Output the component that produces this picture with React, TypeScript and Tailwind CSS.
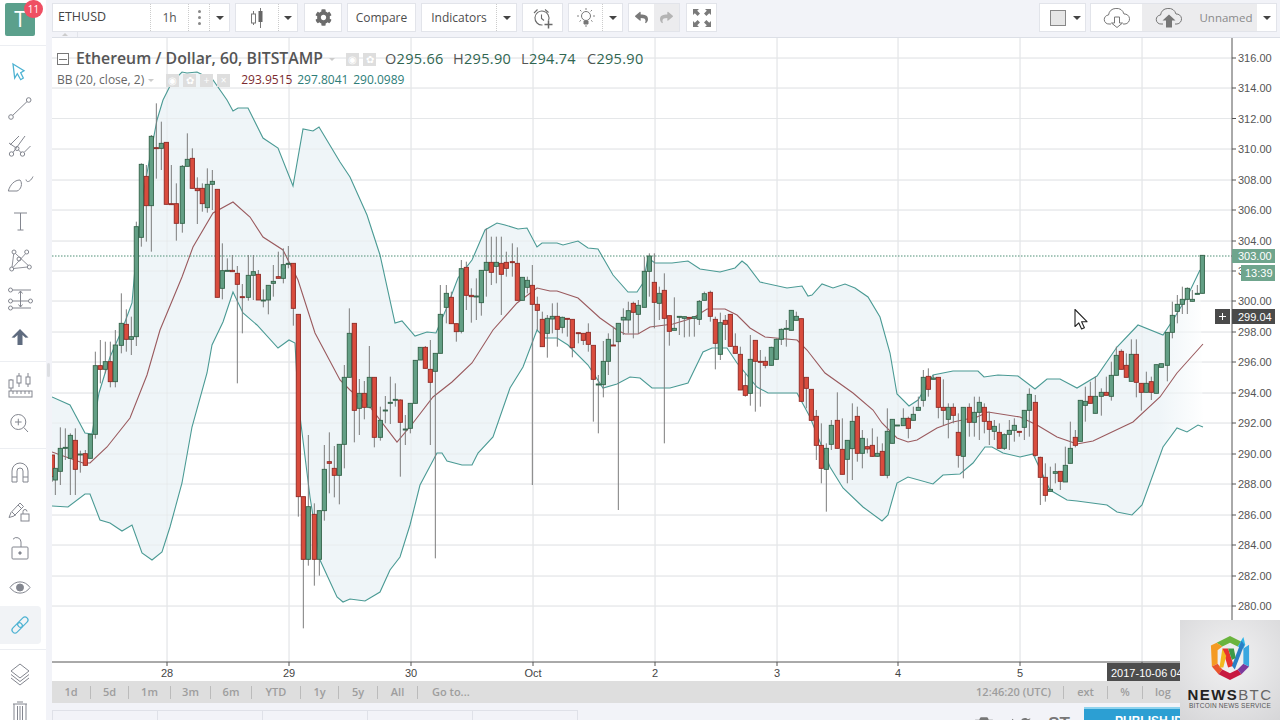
import type { ReactNode } from "react";
import { FaCog, FaReply, FaShare, FaTwitter, FaCamera } from "react-icons/fa";

type C = [number, number, number, number, number, number];
type Group = { ox: number; oy: number; items: C[] };

// candles read off the picture: x, high, body top, body bottom, low, 1 = red
const groups: Group[] = [
  { ox: 50, oy: 340, items: [
    [7,345,345,410,425,1],[16,385,385,420,465,0],[31,262,325,394,435,0],[46,265,322,325,360,0],[61,280,286,355,465,0],[76,265,301,388,465,1],
    [91,332,342,345,398,0],[106,330,341,376,378,1],[121,283,283,355,355,0],[136,35,77,283,296,0],[151,0,77,88,130,1],[166,5,65,88,100,0],[181,5,65,125,142,1],[196,-30,15,125,142,0],
  ] },
  { ox: 50, oy: 100, items: [
    [214,580,670,736,760,0],[229,628,673,718,755,1],[244,650,710,718,765,0],[259,365,380,710,738,0],[274,190,193,412,440,0],[289,195,229,317,425,1],
    [304,105,109,317,455,0],[319,10,143,145,236,1],[334,65,130,145,210,0],[349,127,127,313,313,1],[364,195,311,313,313,1],[379,250,311,370,422,1],
    [397,195,199,370,398,0],[412,100,178,199,199,0],[427,145,175,265,265,1],[442,232,265,272,372,1],[457,250,265,311,335,1],[472,205,253,323,338,0],
    [487,210,244,253,330,0],[502,268,268,592,592,1],[517,430,512,565,598,0],[532,475,511,512,512,0],[547,465,511,515,515,1],[562,498,520,553,850,1],
    [577,552,590,592,700,1],[595,465,526,592,602,0],[610,465,515,526,600,0],[625,510,523,600,600,1],[640,568,600,601,622,0],[655,556,556,600,643,0],
    [670,495,544,550,590,0],[685,455,530,535,535,1],[700,445,494,535,550,0],[715,438,490,493,505,0],[730,490,490,625,677,1],[745,643,643,1190,1250,1],
  ] },
  { ox: 50, oy: 340, items: [
    [760,470,470,658,865,1],[775,285,500,658,677,0],[793,490,523,658,737,1],[808,512,512,658,707,0],[823,315,388,512,542,0],[838,277,365,370,460,1],
    [853,318,385,406,472,1],[868,313,313,406,493,0],[883,75,112,313,385,0],[898,-95,-20,112,112,0],[913,-50,-50,211,307,1],[928,117,160,205,285,0],
    [943,123,160,202,238,1],[958,18,112,202,205,0],[973,112,112,292,322,1],[991,200,241,292,302,0],[1006,168,210,212,250,0],[1021,110,187,190,252,0],
    [1036,130,178,181,200,0],[1051,178,180,247,410,1],[1066,225,267,268,315,0],[1081,190,190,265,280,0],[1096,60,61,190,190,0],[1111,22,22,60,60,0],
    [1126,18,22,85,85,1],[1141,0,88,127,315,1],[1156,40,40,94,655,0],[1171,-165,-77,40,40,0],
  ] },
  { ox: 440, oy: 220, items: [
    [19,195,220,262,310,0],[34,215,232,311,311,1],[49,311,311,335,365,1],[64,120,146,334,340,0],[79,125,142,226,270,1],[94,205,226,230,308,1],
    [109,175,228,230,300,0],[124,150,151,248,287,0],[139,25,127,151,230,0],[154,50,127,157,195,1],[169,50,127,139,190,0],[184,50,130,163,285,1],
    [199,95,127,145,170,1],[217,70,125,128,170,1],[232,82,130,241,241,1],[247,172,172,241,241,0],[262,170,181,202,220,0],[277,135,196,253,795,1],
    [292,230,253,271,330,1],[307,275,298,380,380,1],[322,285,295,340,413,0],[337,250,289,297,340,0],[352,248,289,328,380,1],[367,290,292,322,340,0],
    [382,295,295,298,350,1],[397,298,298,383,412,1],[415,338,338,340,370,1],[430,340,340,361,375,1],[445,310,337,373,395,1],[460,376,376,478,605,1],
    [475,465,492,494,640,0],[490,363,424,494,532,0],[505,340,358,424,465,0],[520,320,375,376,376,1],[535,310,310,365,870,0],[550,265,292,300,345,0],
    [565,245,272,300,340,0],[580,245,250,277,355,1],[595,240,256,283,340,0],[613,110,154,262,262,0],[628,100,108,154,230,0],[643,100,187,247,325,1],
    [658,200,220,250,300,0],[673,160,211,295,670,1],[688,287,287,334,377,1],[703,232,325,331,331,0],[718,289,289,290,345,0],[733,290,290,295,352,0],
    [748,292,292,294,350,1],[763,290,290,295,350,0],[778,240,244,298,315,0],[793,215,221,241,241,0],[811,212,217,289,305,1],[826,290,298,370,448,1],
    [841,278,308,403,420,0],[856,285,301,313,360,1],[871,283,283,379,379,1],[886,340,379,400,400,1],[901,380,403,510,510,1],[916,460,497,526,530,1],
    [931,345,418,520,557,0],[946,361,361,424,575,1],[961,390,424,425,560,1],[976,410,424,436,445,1],[994,380,382,436,436,0],[1009,355,358,418,420,0],
    [1024,325,328,358,375,0],[1039,300,325,328,380,0],[1054,270,271,331,331,0],[1069,275,289,301,301,0],[1084,296,296,544,544,1],[1099,472,472,505,565,1],
    [1114,508,508,601,601,1],[1129,570,589,676,720,1],[1144,610,676,745,790,1],[1159,670,685,748,875,0],[1174,600,616,673,690,0],[1192,517,601,685,685,1],
  ] },
  { ox: 810, oy: 240, items: [
    [97,535,628,703,703,1],[112,601,601,658,730,0],[127,490,544,626,720,0],[142,500,529,640,665,1],[157,570,595,640,685,0],[172,595,620,627,640,1],
    [187,565,616,649,650,1],[202,590,640,649,650,0],[217,610,634,706,706,1],[232,505,574,706,715,0],[247,538,538,610,610,0],[262,555,555,556,556,0],
    [280,505,535,557,557,0],[295,530,535,565,595,1],[310,500,523,541,541,0],[325,470,502,511,511,0],[340,390,412,481,500,0],[355,385,409,448,470,1],
    [370,405,414,418,418,0],[385,412,412,502,535,1],[400,418,502,511,555,1],[415,490,502,538,595,0],[430,490,502,526,550,1],[445,520,577,646,683,1],
    [460,502,502,649,715,0],[478,490,502,547,590,1],[493,470,517,547,590,0],[508,470,487,517,600,0],[523,490,502,544,580,1],[538,515,544,568,615,1],
    [553,540,559,574,600,0],[568,550,577,625,625,1],[583,580,584,625,630,0],[598,540,571,583,630,0],[613,535,556,571,605,0],[628,574,574,577,590,1],
    [643,511,511,562,600,0],[658,445,463,511,590,0],[676,465,487,646,650,1],[691,650,652,712,795,1],[706,670,712,766,785,1],[721,680,748,754,754,0],
    [736,670,695,700,730,0],[751,694,694,724,750,1],[766,620,676,726,726,0],[781,545,625,670,670,0],[796,570,592,616,622,1],[811,481,481,604,604,0],
    [826,440,484,496,545,0],[841,425,469,490,490,1],[856,410,469,520,520,0],[874,445,457,469,527,0],[889,410,457,466,466,1],[904,365,406,469,482,0],
    [919,320,346,406,406,0],[934,328,334,388,388,1],[949,340,376,412,412,1],[964,298,343,424,424,0],[979,298,343,427,472,1],[994,430,430,457,512,1],
    [1009,395,430,457,457,0],[1024,410,425,457,480,1],[1039,374,374,460,460,0],[1054,371,371,382,382,0],[1072,277,277,376,424,0],[1087,185,226,277,295,0],
    [1102,165,193,214,250,0],[1117,140,178,193,222,0],[1132,142,145,178,222,0],[1147,150,178,184,184,0],[1162,135,160,161,161,0],[1177,46,46,160,160,0],
  ] },
];

const upper = "52,397 70,405 85,433 92,434 99,393 110,357 122,330 132,303 136,257 142,200 150,157 157,120 163,100 172,82 182,72 187,73 197,72 213,80 227,100 233,111 238,108 248,108 263,138 278,148 293,186 303,129 313,131 319,127 340,162 350,177 367,215 380,255 395,323 402,321 415,336 427,332 436,333 447,307 458,278 472,260 485,230 497,223 505,225 518,229 527,228 537,247 542,243 557,243 563,245 578,241 588,248 598,249 613,275 628,292 637,292 643,283 648,258 655,263 672,263 688,261 700,269 720,272 735,268 742,261 747,265 760,282 787,288 802,286 808,296 812,295 822,284 833,288 845,284 855,288 868,297 880,317 890,353 897,394 909,406 918,400 933,375 953,371 978,371 984,377 998,375 1018,376 1035,389 1047,379 1060,379 1077,388 1097,376 1117,347 1138,325 1163,335 1173,320 1187,297 1200,270";
const lower = "52,506 68,507 85,494 90,494 100,520 110,523 122,531 132,525 142,553 152,560 162,552 170,527 182,483 192,427 207,373 212,345 223,322 233,292 243,313 257,325 278,348 289,340 295,343 298,400 310,497 320,560 337,597 343,602 350,599 365,601 380,592 390,570 400,557 410,525 420,485 437,453 442,453 447,461 462,465 472,465 478,453 493,437 510,388 523,367 537,330 545,338 557,338 568,345 588,365 603,388 617,384 630,377 640,378 652,388 670,388 688,383 703,352 712,348 727,348 737,363 757,387 768,393 797,393 810,417 830,467 843,488 863,507 882,521 888,515 897,483 908,477 933,484 943,475 960,474 973,463 985,447 992,447 1003,453 1020,457 1033,454 1050,490 1067,500 1077,501 1107,505 1117,512 1132,515 1142,505 1163,447 1177,428 1187,432 1198,425 1203,427";
const middle = "52,452 83,463 90,463 107,447 130,418 147,375 160,330 182,277 193,247 213,213 233,202 250,217 263,237 283,250 298,280 315,333 340,380 350,390 370,407 397,442 413,423 433,397 452,382 472,363 493,330 517,303 537,288 550,291 557,291 578,298 600,318 617,330 625,334 638,334 650,327 673,324 693,318 707,309 725,309 737,315 750,328 765,337 797,340 807,350 825,373 853,393 873,410 882,423 897,438 908,442 917,440 937,428 953,422 977,417 988,412 1020,417 1037,425 1057,437 1077,444 1093,441 1133,422 1160,397 1177,373 1203,344";

const bandFill = upper + " " + lower.split(" ").reverse().join(" ");

const prices = [
  ["316.00", 58], ["314.00", 88], ["312.00", 118.5], ["310.00", 149], ["308.00", 180], ["306.00", 210], ["304.00", 241], ["302.00", 271],
  ["300.00", 301], ["298.00", 332], ["296.00", 362], ["294.00", 393], ["292.00", 423], ["290.00", 454], ["288.00", 484], ["286.00", 515],
  ["284.00", 545], ["282.00", 576], ["280.00", 606],
] as const;
const days = [["28", 167], ["29", 289], ["30", 411], ["Oct", 533], ["2", 655], ["3", 777], ["4", 898], ["5", 1020]] as const;
const extraGrid = [1142];

const Chart = () => (
  <svg width="1228" height="643" viewBox="52 38 1228 643" className="block">
    <defs>
      <clipPath id="pane"><rect x="52" y="38" width="1180" height="624" /></clipPath>
      <linearGradient id="band" gradientUnits="userSpaceOnUse" x1="52" x2="1205" y1="0" y2="0">
        <stop offset="0" stopColor="#eff5f8" />
        <stop offset="0.96" stopColor="#eff5f8" />
        <stop offset="1" stopColor="#ffffff" />
      </linearGradient>
    </defs>
    {prices.map(([, y]) => <line key={y} x1="52" x2="1232" y1={y} y2={y} stroke="#e8e8ea" />)}
    {[...days.map((d) => d[1] as number), ...extraGrid].map((x) => <line key={x} x1={x} x2={x} y1="38" y2="662" stroke="#e8e8ea" />)}
    <g clipPath="url(#pane)">
      <polygon points={bandFill} fill="url(#band)" />
      {[...days.map((d) => d[1] as number), ...extraGrid].map((x) => <line key={x} x1={x} x2={x} y1="38" y2="662" stroke="#e3e6e8" strokeOpacity="0.6" />)}
      {prices.map(([, y]) => <line key={y} x1="52" x2="1232" y1={y} y2={y} stroke="#e3e6e8" strokeOpacity="0.6" />)}
      <polyline points={upper} fill="none" stroke="#4a9a94" strokeWidth="1.1" />
      <polyline points={lower} fill="none" stroke="#4a9a94" strokeWidth="1.1" />
      <polyline points={middle} fill="none" stroke="#9a5a5e" strokeWidth="1.1" />
      <line x1="52" x2="1232" y1="256" y2="256" stroke="#4f8f76" strokeDasharray="1.5 1.5" />
      {groups.flatMap((g) =>
        g.items.map(([zx, hi, top, bot, lo, red]) => {
          const x = g.ox + zx / 3;
          const y = (v: number) => g.oy + v / 3;
          return (
            <g key={`${g.ox}-${g.oy}-${zx}`}>
              <line x1={x} x2={x} y1={y(hi)} y2={y(lo)} stroke="#7c7c7c" />
              <rect
                x={x - 2.1}
                y={y(top)}
                width="4.2"
                height={Math.max(y(bot) - y(top), 1)}
                fill={red ? "#d94c3d" : "#639f85"}
                stroke={red ? "#8f2a25" : "#336349"}
                strokeWidth="0.9"
              />
            </g>
          );
        }),
      )}
    </g>

    {/* price axis */}
    <line x1="1232" x2="1232" y1="38" y2="662" stroke="#555" />
    {prices.map(([label, y]) => (
      <g key={label}>
        <line x1="1232" x2="1236" y1={y} y2={y} stroke="#555" />
        <text x="1238" y={y + 4} fontSize="11" fill="#555" fontFamily="Liberation Sans, sans-serif">{label}</text>
      </g>
    ))}
    <rect x="1232" y="249" width="43" height="14" fill="#6fa58d" />
    <text x="1238" y="260" fontSize="11" fill="#fff" fontFamily="Liberation Sans, sans-serif">303.00</text>
    <rect x="1241" y="265" width="34" height="16" fill="#6fa58d" />
    <text x="1245" y="277" fontSize="11" fill="#fff" fontFamily="Liberation Sans, sans-serif">13:39</text>
    <rect x="1215" y="309" width="15" height="15" fill="#4a4a4a" />
    <path d="M1219 316.5h7M1222.5 313v7" stroke="#fff" />
    <rect x="1232" y="309" width="43" height="15" fill="#4a4a4a" />
    <text x="1238" y="320.5" fontSize="11" fill="#fff" fontFamily="Liberation Sans, sans-serif">299.04</text>

    {/* time axis */}
    <line x1="52" x2="1232" y1="662" y2="662" stroke="#555" />
    {[...days.map((d) => d[1] as number), ...extraGrid].map((x) => <line key={x} x1={x} x2={x} y1="662" y2="666" stroke="#555" />)}
    {days.map(([label, x]) => (
      <text key={label} x={x} y="677" fontSize="11" fill="#444" textAnchor="middle" fontFamily="Liberation Sans, sans-serif">{label}</text>
    ))}
    <rect x="1107" y="663" width="90" height="18" fill="#4d4d4d" />
    <text x="1111" y="677" fontSize="11" fill="#fff" fontFamily="Liberation Sans, sans-serif">2017-10-06 04:00</text>

    {/* mouse pointer */}
    <path d="M1075 309.5v17l3.800-3.600 2.800 6 2.800-1.200-2.800-6h5.400z" fill="#fff" stroke="#222" strokeWidth="1.1" strokeLinejoin="round" />
  </svg>
);

const Caret = () => <span className="h-0 w-0 border-x-[4px] border-t-[4px] border-x-transparent border-t-[#444]" />;

const Tb = ({ w, gray, dotted, children }: { w: string; gray?: boolean; dotted?: boolean; children?: ReactNode }) => (
  <div className={`${w} ${gray ? "bg-[#ececee]" : "bg-white"} ${dotted ? "border-l border-dotted border-[#ccc]" : ""} flex h-full items-center justify-center`}>
    {children}
  </div>
);

const Box = ({ ml, children }: { ml?: string; children: ReactNode }) => (
  <div className={`${ml ?? "ml-[5px]"} flex h-[29px] border border-[#e2e4ea] bg-white`}>{children}</div>
);

const Toolbar = () => (
  <div className="relative flex h-[38px] items-start border-b border-[#dcdfe6] bg-[#f2f3f8] pt-[3px] font-['Open_Sans',sans-serif] text-[12px] text-[#4d4d4d]">
    <Box ml="ml-0">
      <div className="flex w-[97px] items-center pl-[5px] text-[12.5px] text-[#444]">ETHUSD</div>
      <Tb w="w-[38px]" dotted><span className="text-[#555]">1h</span></Tb>
      <Tb w="w-[21px]" dotted>
        <span className="flex flex-col gap-[3px]">
          <span className="h-[3px] w-[3px] rounded-full bg-[#888]" />
          <span className="h-[3px] w-[3px] rounded-full bg-[#888]" />
          <span className="h-[3px] w-[3px] rounded-full bg-[#888]" />
        </span>
      </Tb>
      <Tb w="w-[20px]" dotted><Caret /></Tb>
    </Box>
    <Box>
      <Tb w="w-[42px]">
        <svg width="14" height="20" viewBox="0 0 14 20">
          <path d="M3.5 3v14M10.5 0v20" stroke="#777" />
          <rect x="1.5" y="6" width="4" height="9" fill="#fff" stroke="#777" />
          <rect x="8.5" y="3" width="4" height="11" fill="#666" />
        </svg>
      </Tb>
      <Tb w="w-[19px]" dotted><Caret /></Tb>
    </Box>
    <Box ml="ml-[6px]">
      <Tb w="w-[36px]"><FaCog size={17} color="#6c6c6c" /></Tb>
    </Box>
    <Box>
      <Tb w="w-[67px]">Compare</Tb>
    </Box>
    <Box>
      <Tb w="w-[74px]">Indicators</Tb>
      <Tb w="w-[20px]" dotted><Caret /></Tb>
    </Box>
    <Box>
      <Tb w="w-[39px]">
        <svg width="22" height="22" viewBox="0 0 22 22" fill="none" stroke="#6a6a6a" strokeWidth="1.1">
          <path d="M10.500 18a7 7 0 1 1 6-4.500" />
          <path d="M9.500 7.500v4l2.500 2M2 6l3.500-3.500M13 2.500 16.500 5.500" />
          <path d="M16.500 13.500v8M12.500 17.500h8" strokeWidth="1.5" />
        </svg>
      </Tb>
    </Box>
    <Box>
      <Tb w="w-[33px]">
        <svg width="20" height="22" viewBox="0 0 20 22" fill="none" stroke="#777">
          <circle cx="10" cy="9" r="4.500" />
          <path d="M8 14h4v3H8z" fill="#777" />
          <path d="M9 19h2M10 1v2M3 9H1M19 9h-2M4 3l1.400 1.400M16 3l-1.400 1.400M3.500 14.500l1.500-1.200M16.500 14.500 15 13.300" strokeWidth="0.9" />
        </svg>
      </Tb>
      <Tb w="w-[20px]" dotted><Caret /></Tb>
    </Box>
    <Box>
      <Tb w="w-[25px]"><FaReply size={13} color="#7a7a7a" /></Tb>
      <Tb w="w-[25px]" gray><FaShare size={13} color="#b4b4b4" /></Tb>
    </Box>
    <Box ml="ml-[6px]">
      <Tb w="w-[29px]">
        <svg width="18" height="18" viewBox="0 0 18 18" fill="#7a7a7a">
          <path d="M0 0h6L4.200 1.800 7 4.600 4.600 7 1.800 4.200 0 6zM18 0v6l-1.800-1.800L13.400 7 11 4.600l2.800-2.800L12 0zM0 18v-6l1.800 1.800L4.600 11 7 13.400l-2.800 2.800L6 18zM18 18h-6l1.800-1.800L11 13.400l2.400-2.400 2.800 2.800L18 12z" />
        </svg>
      </Tb>
    </Box>
    <Box ml="ml-auto">
      <Tb w="w-[29px]"><span className="ml-[6px] h-[16px] w-[16px] border border-[#888] bg-[#e6e6e6]" /></Tb>
      <Tb w="w-[16px]"><Caret /></Tb>
    </Box>
    <Box ml="ml-[4px]">
      <Tb w="w-[51px]">
        <svg width="28" height="20" viewBox="0 0 28 20" fill="none" stroke="#777">
          <path d="M8 16H6a4.500 4.500 0 0 1-.5-9A8 8 0 0 1 21 6a5 5 0 0 1 1 10h-2" />
          <path d="M11.500 9h5v6h3L14 19.500 8.500 15h3z" fill="#fff" />
        </svg>
      </Tb>
      <Tb w="w-[53px]" gray>
        <svg width="28" height="20" viewBox="0 0 28 20" fill="none" stroke="#777">
          <path d="M8 16H6a4.500 4.500 0 0 1-.5-9A8 8 0 0 1 21 6a5 5 0 0 1 1 10h-2" />
          <path d="M11 19.500v-7H7.500L14 6.500l6.500 6H17v7z" fill="#777" stroke="none" />
        </svg>
      </Tb>
      <Tb w="w-[62px]" gray><span className="text-[11.5px] text-[#8a8a8a]">Unnamed</span></Tb>
      <Tb w="w-[19px]"><Caret /></Tb>
    </Box>
    <div className="w-[3px]" />
    {/* collapse tab above the chart */}
    <div className="absolute bottom-0 left-0 flex h-[6px] w-[26px] justify-center border-r border-t border-[#e2e4ea] pt-px">
      <span className="h-0 w-0 border-x-[3px] border-b-[3px] border-x-transparent border-b-[#ccc]" />
    </div>
  </div>
);

const SQ = ({ children }: { children?: ReactNode }) => (
  <span className="flex h-[13px] w-[13px] items-center justify-center bg-[#dedede] text-[10px] leading-none text-white">{children}</span>
);

const Legend = () => (
  <div className="absolute left-[5px] top-[11px] font-['Open_Sans',sans-serif]">
    <div className="flex h-[20px] items-center">
      <span className="flex h-[12px] w-[12px] items-center justify-center border border-[#777] bg-white">
        <span className="h-px w-[8px] bg-[#777]" />
      </span>
      <span className="ml-[7px] w-[248px] whitespace-nowrap text-[15.8px] font-semibold text-[#555]">Ethereum / Dollar, 60, BITSTAMP</span>
      <span className="ml-[5px] h-0 w-0 border-x-[3px] border-t-[3px] border-x-transparent border-t-[#ccc]" />
      <span className="ml-[11px] flex gap-[4px]"><SQ>◉</SQ><SQ>✿</SQ></span>
      <span className="ml-[9px] flex text-[14.5px] tracking-[0.3px] text-[#555]">
        <span className="w-[68px]">O<span className="text-[#2f6650]">295.66</span></span>
        <span className="w-[68px]">H<span className="text-[#2f6650]">295.90</span></span>
        <span className="w-[66px]">L<span className="text-[#2f6650]">294.74</span></span>
        <span>C<span className="text-[#2f6650]">295.90</span></span>
      </span>
    </div>
    <div className="mt-[1px] flex h-[20px] items-center text-[12px]">
      <span className="text-[#666]">BB (20, close, 2)</span>
      <span className="ml-[4px] h-0 w-0 border-x-[3px] border-t-[3px] border-x-transparent border-t-[#ccc]" />
      <span className="ml-[12px] flex gap-[4px]"><SQ>◉</SQ><SQ>✿</SQ><SQ>+</SQ><SQ>×</SQ></span>
      <span className="ml-[11px] w-[56px] text-[#7c2b30]">293.9515</span>
      <span className="w-[56px] text-[#2d7d78]">297.8041</span>
      <span className="text-[#2d7d78]">290.0989</span>
    </div>
  </div>
);

const Ic = ({ children, active }: { children: ReactNode; active?: boolean }) => (
  <div className={`h-[38px] w-[41px] ${active ? "rounded-r bg-[#f1f3f6]" : ""}`}>
    <svg width="40" height="38" viewBox="0 0 40 38" fill="none" stroke={active ? "#4db2d2" : "#83868f"} strokeWidth="1">{children}</svg>
  </div>
);

const Sep = () => <div className="my-[5px] h-px w-[46px] bg-[#eceef2]" />;

const Sidebar = () => (
  <div className="flex w-[52px] shrink-0 bg-[#f2f3f8]">
    <div className="w-[46px] bg-white">
      <div className="relative h-[46px] border-b border-[#eceef2]">
        <div className="absolute left-[5px] top-[3px] flex h-[33px] w-[30px] items-center justify-center rounded-[2px] bg-[#5ba08c] font-['Open_Sans',sans-serif] text-[21px] leading-none text-white">T</div>
        <div className="absolute left-[24px] top-0 flex h-[18px] w-[19px] items-center justify-center rounded-full bg-[#ef4f63] font-['Open_Sans',sans-serif] text-[10px] text-white">11</div>
      </div>
      <div className="h-[6px]" />
      <Ic><path d="M13 12l11 6.700-3.300 2 2.600 5.300-2.600 1.700-3.400-6-2.600 4.300z" stroke="#4db2d2" strokeWidth="1.3" /></Ic>
      <Ic><circle cx="11" cy="27" r="2.300" /><circle cx="28.700" cy="10" r="2.300" /><path d="M12.700 25.400 27 11.600" /></Ic>
      <Ic>
        <circle cx="11.500" cy="26" r="2.200" /><circle cx="22.500" cy="26" r="2.200" /><circle cx="17" cy="20.500" r="2" />
        <path d="M9 15l6.500 4.500M18.500 22l3 3M13 24.500 25 8M10 17l9-9M24.500 24l6-6" />
      </Ic>
      <Ic><path d="M8.300 25c1.700-6 6-11 11.700-11 3 3.200 1 10-3 11z" /><path d="M26 13.500c.4 3.500 4.500 2.500 7-3" /></Ic>
      <Ic><path d="M14 9h13M20.500 9v17M17.500 26h6" /></Ic>
      <Ic>
        <circle cx="14" cy="10" r="2" /><circle cx="26.700" cy="10" r="2" /><circle cx="19" cy="17" r="2" /><circle cx="11.700" cy="27" r="2" /><circle cx="29.300" cy="25" r="2" />
        <path d="M12 25.300 13.700 12M15.500 11.500l12.800 12M25.500 11.700 13 25.500M13.500 26.500l14-1.500" strokeWidth="0.9" />
      </Ic>
      <Ic>
        <circle cx="10.500" cy="10" r="2" /><circle cx="10.500" cy="21" r="2" /><circle cx="10.500" cy="28" r="2" /><circle cx="30.500" cy="21" r="2" />
        <path d="M12.500 10H31M12.500 21h16M12.500 28H31M20.500 11v16M18.500 13.500l2-2.500 2 2.500M18.500 24.500l2 2.500 2-2.500" />
      </Ic>
      <Ic><path d="M20 11l8.500 8.500-3 .2-3-2.700V27h-5V17l-3 2.700-3 -.2z" fill="#5f6b7f" stroke="none" /></Ic>
      <Sep />
      <Ic>
        <path d="M11 12v14M19 6v14M28 6v14" /><rect x="9" y="13" width="4" height="8" fill="#fff" /><rect x="17" y="9" width="4" height="7" fill="#fff" /><rect x="26" y="10" width="4" height="7" fill="#fff" />
        <rect x="9" y="24" width="23" height="6" fill="#fff" /><path d="M13 24v3M17 24v3M21 24v3M25 24v3M29 24v3" />
      </Ic>
      <Ic><circle cx="18.300" cy="17" r="7.500" /><path d="M23.800 22.500 28 27M15 17h6.600M18.300 13.700v6.600" /></Ic>
      <Sep />
      <Ic><path d="M12 28V17a8 8 0 0 1 16 0v11h-5V17a3 3 0 0 0-6 0v11zM12 23h5M23 23h5" /></Ic>
      <Ic>
        <path d="M9 25.500l2-5 9-9.500 3.500 3.500-9.500 9.500zM12 20l3.500 3.500M18 13l3.500 3.500" />
        <rect x="21" y="22" width="8" height="7" /><path d="M23 22v-2.500a2 2 0 0 1 4 0" />
      </Ic>
      <Ic><rect x="12" y="17" width="16" height="12" rx="1" /><path d="M25 17v-5a4.500 4.500 0 0 0-8-2.800" transform="translate(-4 0)" /><circle cx="20" cy="23" r="1.200" fill="#83868f" /></Ic>
      <Ic><path d="M10 19.500c5-7.500 15-7.500 20 0-5 7.500-15 7.500-20 0z" /><circle cx="20" cy="19.500" r="3.500" fill="#83868f" /></Ic>
      <Ic active>
        <g transform="rotate(-45 20 19)" strokeWidth="1.200">
          <rect x="10" y="16" width="12" height="6" rx="3" />
          <rect x="18" y="16" width="12" height="6" rx="3" />
        </g>
      </Ic>
      <Sep />
      <Ic><path d="M20 9l9 7-9 7-9-7zM11 19.500l9 7 9-7M11 23l9 7 9-7" /></Ic>
      <Ic><path d="M13 11h14M17 9h6M14 11v18h12V11M17.500 13v15M20 13v15M22.500 13v15" /></Ic>
    </div>
    <div className="relative w-[6px]">
      <div className="absolute left-[1px] top-[363px] h-[14px] w-[3px] rounded bg-[#dcdee2]" />
    </div>
  </div>
);

const RangeBar = () => (
  <div className="flex h-[22px] items-center bg-[#dedede] font-['Open_Sans',sans-serif] text-[11px] font-semibold text-[#9d9d9d]">
    <span className="flex h-[13px] w-[39px] items-center justify-center border-r border-[#bbb]">1d</span>
    <span className="flex h-[13px] w-[38px] items-center justify-center border-r border-[#bbb]">5d</span>
    <span className="flex h-[13px] w-[42px] items-center justify-center border-r border-[#bbb]">1m</span>
    <span className="flex h-[13px] w-[40px] items-center justify-center border-r border-[#bbb]">3m</span>
    <span className="flex h-[13px] w-[41px] items-center justify-center border-r border-[#bbb]">6m</span>
    <span className="flex h-[13px] w-[49px] items-center justify-center border-r border-[#bbb]">YTD</span>
    <span className="flex h-[13px] w-[38px] items-center justify-center border-r border-[#bbb]">1y</span>
    <span className="flex h-[13px] w-[39px] items-center justify-center border-r border-[#bbb]">5y</span>
    <span className="flex h-[13px] w-[40px] items-center justify-center border-r border-[#bbb]">All</span>
    <span className="pl-[14px]">Go to...</span>
    <span className="ml-auto flex h-[13px] items-center border-r border-[#bbb] pr-[12px]">12:46:20 (UTC)</span>
    <span className="flex h-[13px] w-[44px] items-center justify-center border-r border-[#bbb]">ext</span>
    <span className="flex h-[13px] w-[35px] items-center justify-center border-r border-[#bbb]">%</span>
    <span className="flex h-[13px] w-[40px] items-center justify-center">log</span>
    <span className="w-[97px]" />
  </div>
);

const BottomStrip = () => (
  <div className="flex h-[17px] items-start overflow-hidden bg-[#f2f3f8] pt-[7px]">
    {[0, 1, 2, 3, 4].map((i) => (
      <div key={i} className="h-[20px] w-[105px] border-l border-t border-[#dfe1e8]" />
    ))}
    <div className="h-[20px] flex-1 border-l border-[#dfe1e8]" />
    <div className="flex items-start text-[#777]">
      <FaCamera size={20} className="mr-[17px] mt-[6px]" />
      <FaTwitter size={20} className="mr-[17px] mt-[6px]" />
      <span className="mr-[14px] mt-[1px] font-['Liberation_Sans',sans-serif] text-[17px] font-bold">ST</span>
    </div>
    <div className="-mt-[3px] h-[20px] w-[196px] border-t-2 border-[#8fd3ee] bg-[#2c9fd3] pl-[31px] pt-[3px] font-['Liberation_Sans',sans-serif] text-[12px] font-bold text-white">PUBLISH IDEA</div>
  </div>
);

const NewsBtc = () => (
  <div className="absolute left-[1180px] top-[620px] flex h-[100px] w-[100px] flex-col items-center bg-[radial-gradient(circle_at_50%_40%,#f2f2f3,#d6d6d8)]">
    <svg width="42" height="46" viewBox="0 0 44 48" className="mt-[15px]">
      <polygon points="22,1 34,7 30,12 22,8 14,12 8,8" fill="#6ab43e" />
      <polygon points="2,11 8,8 14,12 9,16 9,30 3,33" fill="#f49a22" />
      <polygon points="3,33 9,30 14,36 10,41" fill="#e9542c" />
      <polygon points="10,41 14,36 22,40 30,36 34,41 22,47" fill="#c8183f" />
      <polygon points="34,41 30,36 36,30 42,33" fill="#7d3a9c" />
      <polygon points="36,30 36,14 42,10 42,33" fill="#3aa7e0" />
      <polygon points="30,12 36,2 38,10 36,14" fill="#2fb5e8" />
      <polygon points="14,14 20,14 26,32 20,34" fill="#e8332f" />
      <polygon points="14,14 11,34 15,34 18,22" fill="#f3b81f" />
      <polygon points="24,32 34,6 37,10 27,36" fill="#2a7fc4" />
      <polygon points="20,14 26,14 28,24 24,26" fill="#3d9a48" />
    </svg>
    <div className="mt-[6px] whitespace-nowrap font-['Liberation_Sans',sans-serif] text-[15px] leading-none tracking-[1.4px] text-[#222]">
      <span className="font-bold">NEWS</span><span className="text-[#666]">BTC</span>
    </div>
    <div className="mt-[1px] whitespace-nowrap font-['Liberation_Sans',sans-serif] text-[6.500px] leading-none tracking-[0.2px] text-[#555]">BITCOIN NEWS SERVICE</div>
  </div>
);

export default function App() {
  return (
    <div className="relative flex h-[720px] w-[1280px] overflow-hidden bg-white">
      <Sidebar />
      <div className="flex min-w-0 flex-1 flex-col">
        <Toolbar />
        <div className="relative">
          <Chart />
          <Legend />
        </div>
        <RangeBar />
        <BottomStrip />
      </div>
      <NewsBtc />
    </div>
  );
}
